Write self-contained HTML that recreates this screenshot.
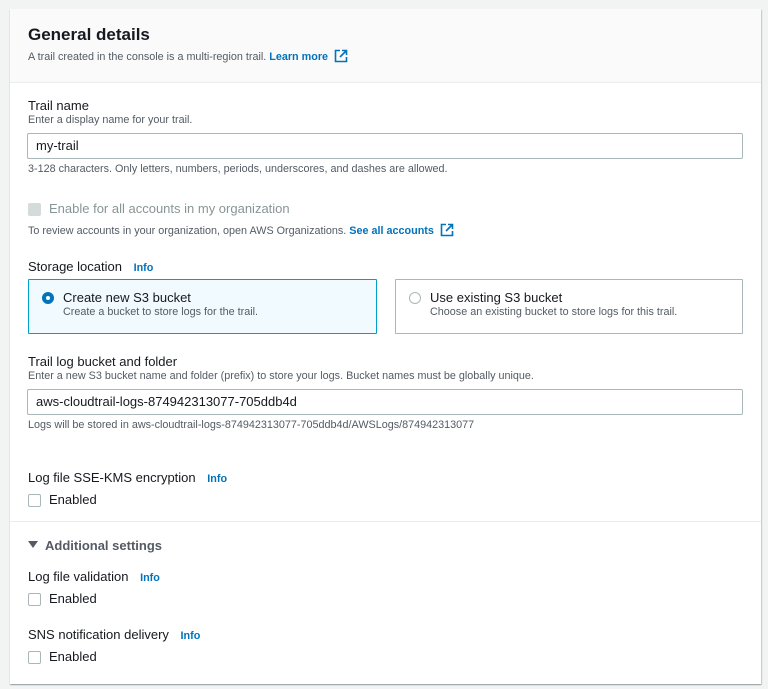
<!DOCTYPE html>
<html><head><style>
*{box-sizing:border-box;margin:0;padding:0}
body{width:768px;height:689px;background:#f2f3f3;font-family:"Liberation Sans",Arial,sans-serif;color:#16191f;position:relative;overflow:hidden}
.card{position:absolute;left:10px;top:9px;width:751px;height:675px;background:#fff;box-shadow:0 1px 1px 0 rgba(0,28,36,.3),1px 1px 1px 0 rgba(0,28,36,.15)}
.hdr{position:absolute;left:0;top:0;width:751px;height:74px;background:#fafafa;border-bottom:1px solid #eaeded}
.a{position:absolute;white-space:nowrap}
.h2{font-size:17px;font-weight:bold}
.lbl{font-size:13px;color:#16191f;line-height:15px}
.desc{font-size:10.8px;color:#545b64;line-height:13px}
.link{color:#0073bb;font-weight:bold;font-size:10.8px}
.input{position:absolute;left:17px;width:716px;height:26px;border:1px solid #aab7b8;border-radius:2px;font-size:13px;padding:4px 8px}
.cb{position:absolute;width:13px;height:13px;border:1px solid #aab7b8;border-radius:2px;background:#fff}
.tile{position:absolute;top:270px;height:55px;border:1px solid #aab7b8;border-radius:1px}
</style></head><body>
<div class="card">
<div class="hdr"></div>
<div class="a h2" style="left:18px;top:16px">General details</div>
<div class="a desc" style="left:18px;top:40px">A trail created in the console is a multi-region trail. <span class="link">Learn more</span>
<svg width="14" height="14" viewBox="0 0 14 14" style="vertical-align:-3px;margin-left:3px"><path d="M6 1.5H1.5v11h11V8M8 1.5h4.5V6M12.5 1.5L6 8" fill="none" stroke="#0073bb" stroke-width="1.6"/></svg></div>

<div class="a lbl" style="left:18px;top:89px">Trail name</div>
<div class="a desc" style="left:18px;top:105px">Enter a display name for your trail.</div>
<div class="input" style="top:124px">my-trail</div>
<div class="a desc" style="left:18px;top:154px">3-128 characters. Only letters, numbers, periods, underscores, and dashes are allowed.</div>

<div class="cb" style="left:18px;top:194px;background:#d5dbdb;border-color:#d5dbdb"></div>
<div class="a lbl" style="left:39px;top:192px;color:#879596">Enable for all accounts in my organization</div>
<div class="a desc" style="left:18px;top:214px">To review accounts in your organization, open AWS Organizations. <span class="link">See all accounts</span>
<svg width="14" height="14" viewBox="0 0 14 14" style="vertical-align:-3px;margin-left:3px"><path d="M6 1.5H1.5v11h11V8M8 1.5h4.5V6M12.5 1.5L6 8" fill="none" stroke="#0073bb" stroke-width="1.6"/></svg></div>

<div class="a lbl" style="left:18px;top:250px">Storage location <span class="link" style="margin-left:8px">Info</span></div>
<div class="tile" style="left:18px;width:349px;background:#f1faff;border-color:#00a1c9"></div>
<div class="a" style="left:32px;top:283px;width:12px;height:12px;border-radius:50%;border:4px solid #0073bb;background:#fff"></div>
<div class="a lbl" style="left:53px;top:281px">Create new S3 bucket</div>
<div class="a desc" style="left:53px;top:297px">Create a bucket to store logs for the trail.</div>
<div class="tile" style="left:385px;width:348px;background:#fff"></div>
<div class="a" style="left:399px;top:283px;width:12px;height:12px;border-radius:50%;border:1px solid #aab7b8;background:#fff"></div>
<div class="a lbl" style="left:420px;top:281px">Use existing S3 bucket</div>
<div class="a desc" style="left:420px;top:297px">Choose an existing bucket to store logs for this trail.</div>

<div class="a lbl" style="left:18px;top:345px">Trail log bucket and folder</div>
<div class="a desc" style="left:18px;top:361px">Enter a new S3 bucket name and folder (prefix) to store your logs. Bucket names must be globally unique.</div>
<div class="input" style="top:380px">aws-cloudtrail-logs-874942313077-705ddb4d</div>
<div class="a desc" style="left:18px;top:410px">Logs will be stored in aws-cloudtrail-logs-874942313077-705ddb4d/AWSLogs/874942313077</div>

<div class="a lbl" style="left:18px;top:461px">Log file SSE-KMS encryption <span class="link" style="margin-left:8px">Info</span></div>
<div class="cb" style="left:18px;top:485px"></div>
<div class="a lbl" style="left:39px;top:483px">Enabled</div>

<div class="a" style="left:0;top:512px;width:751px;height:1px;background:#eaeded"></div>
<div class="a" style="left:18px;top:532px;width:0;height:0;border-left:5px solid transparent;border-right:5px solid transparent;border-top:7px solid #545b64"></div>
<div class="a lbl" style="left:35px;top:529px;font-weight:bold;color:#545b64">Additional settings</div>

<div class="a lbl" style="left:18px;top:560px">Log file validation <span class="link" style="margin-left:8px">Info</span></div>
<div class="cb" style="left:18px;top:584px"></div>
<div class="a lbl" style="left:39px;top:582px">Enabled</div>

<div class="a lbl" style="left:18px;top:618px">SNS notification delivery <span class="link" style="margin-left:8px">Info</span></div>
<div class="cb" style="left:18px;top:642px"></div>
<div class="a lbl" style="left:39px;top:640px">Enabled</div>
</div>
</body></html>
